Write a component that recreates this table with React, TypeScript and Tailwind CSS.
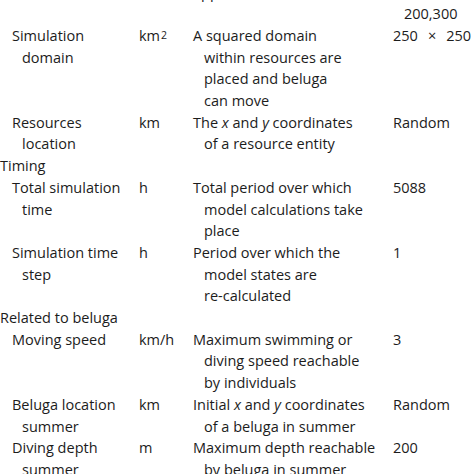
import React from "react";

type Row =
  | { kind: "section"; label: string }
  | { kind: "row"; name: React.ReactNode; unit: React.ReactNode; desc: React.ReactNode; value: React.ReactNode };

const I = ({ children }: { children: React.ReactNode }) => <i>{children}</i>;

const rows: Row[] = [
  {
    kind: "row",
    name: "",
    unit: "",
    desc: <>applied</>,
    value: (
      <>
        {"\u00a0"}
        <br />
        200,300
      </>
    ),
  },
  {
    kind: "row",
    name: (
      <>
        Simulation
        <br />
        domain
      </>
    ),
    unit: (
      <>
        km<sup className="text-[10.5px] relative -top-[2px] ml-[1px]">2</sup>
      </>
    ),
    desc: (
      <>
        A squared domain
        <br />
        within resources are
        <br />
        placed and beluga
        <br />
        can move
      </>
    ),
    value: (
      <>
        250<span className="mx-[10px]">×</span>250
      </>
    ),
  },
  {
    kind: "row",
    name: (
      <>
        Resources
        <br />
        location
      </>
    ),
    unit: "km",
    desc: (
      <>
        The <I>x</I> and <I>y</I> coordinates
        <br />
        of a resource entity
      </>
    ),
    value: "Random",
  },
  { kind: "section", label: "Timing" },
  {
    kind: "row",
    name: (
      <>
        Total simulation
        <br />
        time
      </>
    ),
    unit: "h",
    desc: (
      <>
        Total period over which
        <br />
        model calculations take
        <br />
        place
      </>
    ),
    value: "5088",
  },
  {
    kind: "row",
    name: (
      <>
        Simulation time
        <br />
        step
      </>
    ),
    unit: "h",
    desc: (
      <>
        Period over which the
        <br />
        model states are
        <br />
        re-calculated
      </>
    ),
    value: "1",
  },
  { kind: "section", label: "Related to beluga" },
  {
    kind: "row",
    name: "Moving speed",
    unit: "km/h",
    desc: (
      <>
        Maximum swimming or
        <br />
        diving speed reachable
        <br />
        by individuals
      </>
    ),
    value: "3",
  },
  {
    kind: "row",
    name: (
      <>
        Beluga location
        <br />
        summer
      </>
    ),
    unit: "km",
    desc: (
      <>
        Initial <I>x</I> and <I>y</I> coordinates
        <br />
        of a beluga in summer
      </>
    ),
    value: "Random",
  },
  {
    kind: "row",
    name: (
      <>
        Diving depth
        <br />
        summer
      </>
    ),
    unit: "m",
    desc: (
      <>
        Maximum depth reachable
        <br />
        by beluga in summer
      </>
    ),
    value: "200",
  },
];

export default function App() {
  return (
    <div
      className="w-[474px] h-[474px] overflow-hidden bg-white text-[#1c1c1c] text-[14.5px] leading-[21.7px]"
      style={{ fontFamily: '"Open Sans", "Noto Sans", sans-serif' }}
    >
      <div className="mt-[-18.5px] grid grid-cols-[139px_54px_200px_81px]">
        {rows.map((r, i) =>
          r.kind === "section" ? (
            <div key={i} className="col-span-4">
              {r.label}
            </div>
          ) : (
            <React.Fragment key={i}>
              <div className="pl-[22px] -indent-[10px] whitespace-nowrap">{r.name}</div>
              <div className="whitespace-nowrap">{r.unit}</div>
              <div className="pl-[11px] -indent-[11px] whitespace-nowrap">{r.desc}</div>
              <div className="pl-[11px] -indent-[11px] whitespace-nowrap">{r.value}</div>
            </React.Fragment>
          )
        )}
      </div>
    </div>
  );
}
